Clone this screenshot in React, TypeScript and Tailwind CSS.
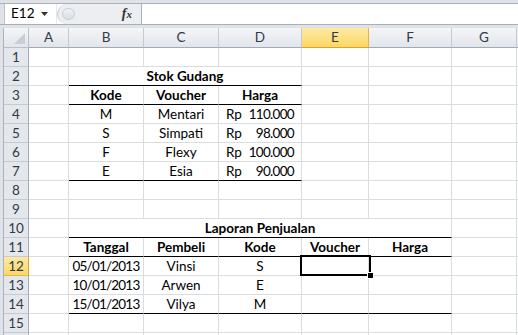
import React from "react";

type Cell = {
  t?: string;
  span?: number;
  align?: "c" | "l" | "r" | "acc";
  bold?: boolean;
  bb?: boolean;
  sel?: boolean;
  num?: boolean;
};

const COLS = ["A", "B", "C", "D", "E", "F", "G"];

const e = (): Cell => ({});

const rows: Cell[][] = [
  [e(), e(), e(), e(), e(), e(), e()],
  [e(), { t: "Stok Gudang", span: 3, align: "c", bold: true, bb: true }, e(), e(), e()],
  [e(), { t: "Kode", align: "c", bold: true, bb: true }, { t: "Voucher", align: "c", bold: true, bb: true }, { t: "Harga", align: "c", bold: true, bb: true }, e(), e(), e()],
  [e(), { t: "M", align: "c" }, { t: "Mentari", align: "c" }, { t: "110.000", align: "acc" }, e(), e(), e()],
  [e(), { t: "S", align: "c" }, { t: "Simpati", align: "c" }, { t: "98.000", align: "acc" }, e(), e(), e()],
  [e(), { t: "F", align: "c" }, { t: "Flexy", align: "c" }, { t: "100.000", align: "acc" }, e(), e(), e()],
  [e(), { t: "E", align: "c", bb: true }, { t: "Esia", align: "c", bb: true }, { t: "90.000", align: "acc", bb: true }, e(), e(), e()],
  [e(), e(), e(), e(), e(), e(), e()],
  [e(), e(), e(), e(), e(), e(), e()],
  [e(), { t: "Laporan Penjualan", span: 5, align: "c", bold: true, bb: true }, e()],
  [e(), { t: "Tanggal", align: "c", bold: true, bb: true }, { t: "Pembeli", align: "c", bold: true, bb: true }, { t: "Kode", align: "c", bold: true, bb: true }, { t: "Voucher", align: "c", bold: true, bb: true }, { t: "Harga", align: "c", bold: true, bb: true }, e()],
  [e(), { t: "05/01/2013", align: "c", num: true }, { t: "Vinsi", align: "c" }, { t: "S", align: "c" }, { sel: true }, e(), e()],
  [e(), { t: "10/01/2013", align: "c", num: true }, { t: "Arwen", align: "c" }, { t: "E", align: "c" }, e(), e(), e()],
  [e(), { t: "15/01/2013", align: "c", bb: true, num: true }, { t: "Vilya", align: "c", bb: true }, { t: "M", align: "c", bb: true }, { bb: true }, { bb: true }, e()],
  [e(), e(), e(), e(), e(), e(), e()],
  [e(), e(), e(), e(), e(), e(), e()],
];

function spanClass(n?: number) {
  if (n === 3) return "col-span-3";
  if (n === 5) return "col-span-5";
  return "";
}

function DataCell({ c }: { c: Cell }) {
  const border = c.bb ? "border-b-black" : "border-b-[#dadcdd]";
  const base = `relative h-[19px] border-r border-b border-r-[#dadcdd] ${border} flex items-center pt-[1px] text-[13.5px] text-black whitespace-nowrap ${spanClass(c.span)}`;
  if (c.align === "acc") {
    return (
      <div className={`${base} justify-between pl-[7px] pr-[7px]`}>
        <span>Rp</span>
        <span className="tracking-[-0.7px]">{c.t}</span>
      </div>
    );
  }
  return (
    <div className={`${base} justify-center ${c.bold ? "font-bold" : ""} ${c.num ? "tracking-[-0.8px]" : ""} ${c.sel ? "z-10" : ""}`}>
      {c.t}
      {c.sel && (
        <div className="absolute left-[-2px] top-[-2px] w-[71px] h-[21px] border-2 border-black">
          <div className="absolute right-[-5px] bottom-[-5px] w-[7px] h-[7px] bg-black border border-white" />
        </div>
      )}
    </div>
  );
}

export default function App() {
  return (
    <div className="w-[518px] h-[335px] overflow-hidden bg-[#dfe3e8] flex flex-col font-['Lato',sans-serif]">
      {/* formula bar */}
      <div className="h-[3px] shrink-0 bg-[#dfe3e8]" />
      <div className="h-[22px] shrink-0 flex bg-white border-t border-b border-[#a9b1bb]">
        <div className="w-[4px] bg-[#dfe3e8]" />
        <div className="w-[52px] flex items-center pl-[6px] pr-[8px] justify-between border-l border-[#b9c1ca]">
          <span className="text-[13.5px] text-black leading-none">E12</span>
          <svg width="7" height="4" viewBox="0 0 7 4">
            <path d="M0 0H7L3.5 4Z" fill="#333" />
          </svg>
        </div>
        <div className="w-[1px] bg-[#e6e9ed]" />
        <div className="w-[84px] relative flex items-center justify-end pr-[9px] bg-[#eceef1] rounded-l-[10px] border-l border-[#c4cad2]">
          <div className="absolute left-[4px] top-[4px] w-[13px] h-[12px] rounded-full bg-gradient-to-b from-[#f2f3f5] to-[#d9dde2] border border-[#c9ced5]" />
          <span className="font-['Liberation_Serif',serif] italic font-bold text-[14px] text-[#333] leading-none">
            f<span className="text-[11px]">x</span>
          </span>
        </div>
        <div className="w-[1px] bg-[#a9b1bb]" />
        <div className="flex-1 bg-white" />
      </div>
      <div className="h-[3px] shrink-0 bg-[#dfe3e8]" />
      {/* sheet */}
      <div className="flex flex-1 min-h-0">
        <div className="w-[4px] shrink-0 bg-[#dfe3e8] border-r border-[#aab3bd]" />
        <div className="grid grid-cols-[25px_40px_75px_75px_83px_67px_83px_65px_1fr] auto-rows-[19px] grid-rows-[20px] flex-1 bg-white content-start">
          {/* header row */}
          <div className="h-[20px] relative bg-gradient-to-b from-[#f4f5f7] to-[#e2e5ea] border-r border-b border-[#b9bfc7]">
            <svg className="absolute right-[3px] bottom-[3px]" width="11" height="11" viewBox="0 0 11 11">
              <path d="M11 0V11H0Z" fill="#c9ced5" />
            </svg>
          </div>
          {COLS.map((c) =>
            c === "E" ? (
              <div key={c} className="h-[20px] flex items-center justify-center bg-gradient-to-b from-[#fde9a4] to-[#fbd862] border-r border-b border-r-[#e2b34e] border-b-[#e09f2f] text-[13.5px] text-[#303a47]">
                {c}
              </div>
            ) : (
              <div key={c} className="h-[20px] flex items-center justify-center bg-gradient-to-b from-[#f4f5f7] to-[#e2e5ea] border-r border-b border-r-[#c5cad1] border-b-[#9eabb9] text-[13.5px] text-[#303a47]">
                {c}
              </div>
            )
          )}
          <div className="h-[20px] bg-gradient-to-b from-[#f4f5f7] to-[#e2e5ea] border-b border-[#9eabb9]" />
          {rows.map((r, i) => (
            <React.Fragment key={i}>
              {i === 11 ? (
                <div className="h-[19px] flex items-center justify-center bg-gradient-to-b from-[#fde9a4] to-[#fbd862] border-r border-b border-r-[#e09f2f] border-b-[#e2b34e] text-[13.5px] text-[#303a47]">
                  {i + 1}
                </div>
              ) : (
                <div className="h-[19px] flex items-center justify-center bg-[#e4e8ed] border-r border-b border-r-[#9eabb9] border-b-[#c5cad1] text-[13.5px] text-[#303a47]">
                  {i < 15 ? i + 1 : ""}
                </div>
              )}
              {r.map((c, j) => (
                <DataCell key={j} c={c} />
              ))}
              <div className="h-[19px] border-b border-[#dadcdd]" />
            </React.Fragment>
          ))}
        </div>
      </div>
    </div>
  );
}
